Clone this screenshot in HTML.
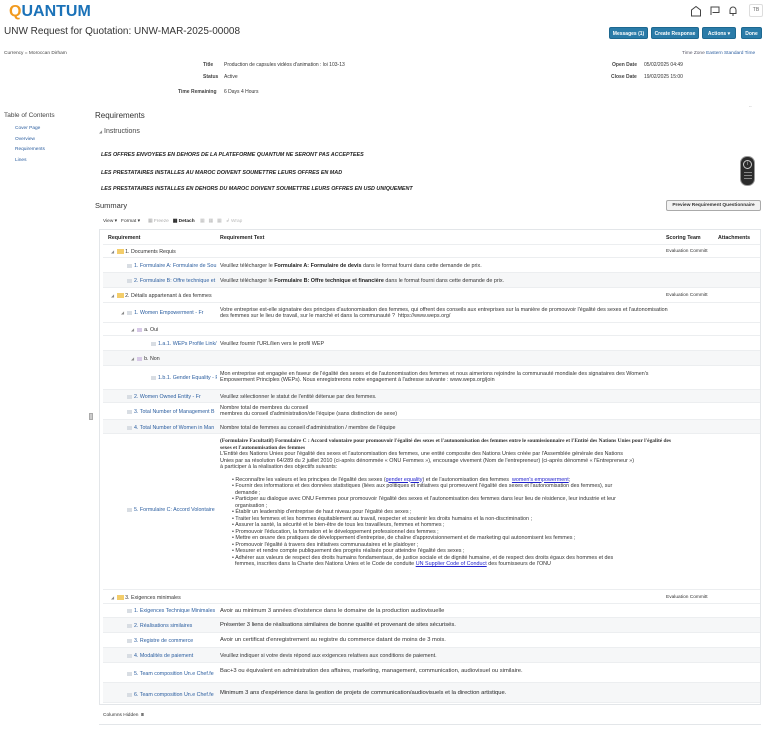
<!DOCTYPE html>
<html><head><meta charset="utf-8"><style>
*{margin:0;padding:0;box-sizing:border-box}
body{width:768px;height:729px;background:#fff;font-family:"Liberation Sans",Arial,sans-serif;color:#333;position:relative;overflow:hidden;font-size:5px}
.a{position:absolute;white-space:nowrap}
.lnk{color:#2a5d9f}
.btn{position:absolute;top:27px;height:12px;background:#2a7ba8;color:#fff;font-size:5px;font-weight:bold;border-radius:2px;line-height:12px;text-align:center;border:1px solid #1d6890}
.row{position:absolute;left:103px;width:657px;border-bottom:1px solid #eceef0;font-size:5.3px}
.sh{background:#f6f7f8}
.c1{position:absolute;overflow:hidden;white-space:nowrap;color:#2a5d9f}
.c2{position:absolute;left:117px;width:445px;line-height:6.3px;color:#333;white-space:nowrap;font-size:5.4px}
.ic{display:inline-block;width:5px;height:4px;background:#d8dde3;margin-right:2px;vertical-align:-1px}
.fd{display:inline-block;width:7px;height:5px;background:#f3cd6b;margin-right:1px;vertical-align:-1px}
.tri{color:#888;margin-right:3px;font-size:4px}
b{color:#222}
</style></head><body>
<div class="a" style="left:9px;top:3px;font-size:16px;font-weight:bold;color:#1b72b8;letter-spacing:0"><span style="color:#f29a1e">Q</span>UANTUM</div>
<div class="a" style="left:4px;top:26px;font-size:10px;color:#333">UNW Request for Quotation: UNW-MAR-2025-00008</div>
<svg class="a" style="left:690px;top:5px" width="12" height="12" viewBox="0 0 12 12"><path d="M1.5 11V5L6 1.5 10.5 5V11Z" fill="none" stroke="#444" stroke-width="1"/></svg>
<svg class="a" style="left:709px;top:5px" width="12" height="12" viewBox="0 0 12 12"><path d="M2 10V2H10V7.5H3.5" fill="none" stroke="#444" stroke-width="1"/></svg>
<svg class="a" style="left:727px;top:5px" width="12" height="12" viewBox="0 0 12 12"><path d="M3 8.5V5A3 3 0 0 1 9 5V8.5H2.5 9.5M5 10H7" fill="none" stroke="#444" stroke-width="1"/></svg>
<div class="a" style="left:749px;top:4px;width:14px;height:13px;border:1px solid #ddd;border-radius:2px;font-size:5px;color:#666;text-align:center;line-height:11px">TB</div>
<div class="btn" style="left:609px;width:39px">Messages (1)</div>
<div class="btn" style="left:651px;width:48px">Create Response</div>
<div class="btn" style="left:702px;width:34px">Actions &#9662;</div>
<div class="btn" style="left:741px;width:21px">Done</div>
<div class="a" style="left:4px;top:51px;font-size:4.8px;color:#444">Currency = Moroccan Dirham</div>
<div class="a" style="left:682px;top:51px;font-size:4.8px;color:#556">Time Zone <span style="color:#2a5d9f">Eastern Standard Time</span></div>
<div class="a" style="left:203px;top:62px;font-size:5px;font-weight:bold;color:#444">Title</div>
<div class="a" style="left:224px;top:62px;font-size:5px">Production de capsules vidéos d'animation : loi 103-13</div>
<div class="a" style="left:203px;top:74px;font-size:5px;font-weight:bold;color:#444">Status</div>
<div class="a" style="left:224px;top:74px;font-size:5px">Active</div>
<div class="a" style="left:178px;top:89px;font-size:5px;font-weight:bold;color:#444">Time Remaining</div>
<div class="a" style="left:224px;top:89px;font-size:5px">6 Days 4 Hours</div>
<div class="a" style="left:612px;top:62px;font-size:5px;font-weight:bold;color:#444">Open Date</div>
<div class="a" style="left:644px;top:62px;font-size:5px">05/02/2025 04:49</div>
<div class="a" style="left:611px;top:74px;font-size:5px;font-weight:bold;color:#444">Close Date</div>
<div class="a" style="left:644px;top:74px;font-size:5px">19/02/2025 15:00</div>
<div class="a" style="left:749px;top:103px;font-size:4px;color:#888">--</div>
<div class="a" style="left:4px;top:112px;font-size:6.5px;color:#444">Table of Contents</div>
<div class="a lnk" style="left:15px;top:126px;font-size:4.8px">Cover Page</div>
<div class="a lnk" style="left:15px;top:137px;font-size:4.8px">Overview</div>
<div class="a lnk" style="left:15px;top:147px;font-size:4.8px">Requirements</div>
<div class="a lnk" style="left:15px;top:158px;font-size:4.8px">Lines</div>
<div class="a" style="left:95px;top:111px;font-size:8px;color:#333">Requirements</div>
<div class="a" style="left:99px;top:128px;font-size:7px;color:#444"><span style="font-size:4px;color:#888">&#9698;</span> Instructions</div>
<div class="a" style="left:101px;top:152px;font-size:5.4px;font-weight:bold;font-style:italic;color:#222">LES OFFRES ENVOYEES EN DEHORS DE LA PLATEFORME QUANTUM NE SERONT PAS ACCEPTEES</div>
<div class="a" style="left:101px;top:170px;font-size:5.4px;font-weight:bold;font-style:italic;color:#222">LES PRESTATAIRES INSTALLES AU MAROC DOIVENT SOUMETTRE LEURS OFFRES EN MAD</div>
<div class="a" style="left:101px;top:186px;font-size:5.4px;font-weight:bold;font-style:italic;color:#222">LES PRESTATAIRES INSTALLES EN DEHORS DU MAROC DOIVENT SOUMETTRE LEURS OFFRES EN USD UNIQUEMENT</div>
<div class="a" style="left:740px;top:156px;width:15px;height:30px;background:#2b2b2b;border-radius:7px;border:1px solid #999"><div style="margin:3px auto 0;width:9px;height:9px;border:1px solid #ccc;border-radius:50%;color:#ccc;font-size:5px;text-align:center;line-height:7px">i</div><div style="margin:3px auto 0;width:8px;height:8px;background:repeating-linear-gradient(#888 0 1px,transparent 1px 3px)"></div></div>
<div class="a" style="left:95px;top:201px;font-size:7.5px;color:#333">Summary</div>
<div class="a" style="left:666px;top:200px;width:95px;height:11px;border:1px solid #aaa;border-radius:2px;background:#f2f2f2;font-size:4.8px;font-weight:bold;text-align:center;line-height:9px;color:#333">Preview Requirement Questionnaire</div>
<div class="a" style="left:103px;top:219px;font-size:4.8px;color:#333">View &#9662; &nbsp; Format &#9662; &nbsp;&nbsp;&nbsp;&nbsp; <span style="color:#aaa">&#9638; Freeze</span> &nbsp; <b>&#9638; Detach</b> &nbsp;&nbsp; <span style="color:#bbb">&#9638; &nbsp; &#9638; &nbsp; &#9638; &nbsp; &#8626; Wrap</span></div>
<div class="a" style="left:99px;top:229px;width:662px;height:476px;border:1px solid #e3e6e9"></div>
<div class="a" style="left:89px;top:413px;width:4px;height:7px;background:#ccc;border:1px solid #aaa"></div>
<div class="row" style="top:230px;height:15px;font-weight:bold;color:#222"><div class="a" style="left:5px;top:5px">Requirement</div><div class="a" style="left:117px;top:5px">Requirement Text</div><div class="a" style="left:563px;top:5px">Scoring Team</div><div class="a" style="left:615px;top:5px">Attachments</div></div>
<div class="row" style="top:245px;height:13px"><div class="c1" style="left:8px;top:4px;color:#333"><span class="tri">&#9698;</span><span class="fd"></span>1. Documents Requis</div><div class="a" style="left:563px;top:4px;font-size:4.8px">Evaluation Committ</div></div>
<div class="row" style="top:258px;height:15px"><div class="c1" style="left:24px;top:5px;width:90px"><span class="ic"></span>1. Formulaire A: Formulaire de Sou</div><div class="c2" style="top:5px">Veuillez télécharger le <b>Formulaire A: Formulaire de devis</b> dans le format fourni dans cette demande de prix.</div></div>
<div class="row sh" style="top:273px;height:15px"><div class="c1" style="left:24px;top:5px;width:90px"><span class="ic"></span>2. Formulaire B: Offre technique et</div><div class="c2" style="top:5px">Veuillez télécharger le <b>Formulaire B: Offre technique et financière</b> dans le format fourni dans cette demande de prix.</div></div>
<div class="row" style="top:288px;height:15px"><div class="c1" style="left:8px;top:5px;color:#333"><span class="tri">&#9698;</span><span class="fd"></span>2. Détails appartenant à des femmes</div><div class="a" style="left:563px;top:5px;font-size:4.8px">Evaluation Committ</div></div>
<div class="row" style="top:303px;height:20px"><div class="c1" style="left:18px;top:7px;width:96px"><span class="tri">&#9698;</span><span class="ic"></span>1. Women Empowerment - Fr</div><div class="c2" style="top:4px">Votre entreprise est-elle signataire des principes d'autonomisation des femmes, qui offrent des conseils aux entreprises sur la manière de promouvoir l'égalité des sexes et l'autonomisation<br>des femmes sur le lieu de travail, sur le marché et dans la communauté ? &nbsp;https://www.weps.org/</div></div>
<div class="row" style="top:323px;height:13px"><div class="c1" style="left:28px;top:4px;color:#333"><span class="tri">&#9698;</span><span class="ic" style="background:#d7c9e6"></span>a. Oui</div></div>
<div class="row" style="top:336px;height:15px"><div class="c1" style="left:48px;top:5px;width:66px"><span class="ic"></span>1.a.1. WEPs Profile Link/</div><div class="c2" style="top:5px">Veuillez fournir l'URL/lien vers le profil WEP</div></div>
<div class="row sh" style="top:351px;height:15px"><div class="c1" style="left:28px;top:5px;color:#333"><span class="tri">&#9698;</span><span class="ic" style="background:#d7c9e6"></span>b. Non</div></div>
<div class="row" style="top:366px;height:24px"><div class="c1" style="left:48px;top:9px;width:66px"><span class="ic"></span>1.b.1. Gender Equality - F</div><div class="c2" style="top:5px">Mon entreprise est engagée en faveur de l'égalité des sexes et de l'autonomisation des femmes et nous aimerions rejoindre la communauté mondiale des signataires des Women's<br>Empowerment Principles (WEPs). Nous enregistrerons notre engagement à l'adresse suivante : www.weps.org/join</div></div>
<div class="row sh" style="top:390px;height:13px"><div class="c1" style="left:24px;top:4px;width:90px"><span class="ic"></span>2. Women Owned Entity - Fr</div><div class="c2" style="top:4px">Veuillez sélectionner le statut de l'entité détenue par des femmes.</div></div>
<div class="row" style="top:403px;height:17px"><div class="c1" style="left:24px;top:6px;width:90px"><span class="ic"></span>3. Total Number of Management B</div><div class="c2" style="top:3px;line-height:5.8px">Nombre total de membres du conseil<br>membres du conseil d'administration/de l'équipe (sans distinction de sexe)</div></div>
<div class="row sh" style="top:420px;height:14px"><div class="c1" style="left:24px;top:5px;width:90px"><span class="ic"></span>4. Total Number of Women in Man</div><div class="c2" style="top:5px">Nombre total de femmes au conseil d'administration / membre de l'équipe</div></div>
<div class="row" style="top:434px;height:156px"><div class="c1" style="left:24px;top:73px;width:90px"><span class="ic"></span>5. Formulaire C: Accord Volontaire</div>
<div class="c2" style="top:4px;line-height:6.5px"><span style="font-family:'Liberation Serif',serif;font-weight:bold;line-height:5.5px">(Formulaire Facultatif) Formulaire C : Accord volontaire pour promouvoir l'égalité des sexes et l'autonomisation des femmes entre le soumissionnaire et l'Entité des Nations Unies pour l'égalité des<br>sexes et l'autonomisation des femmes</span><br>L'Entité des Nations Unies pour l'égalité des sexes et l'autonomisation des femmes, une entité composite des Nations Unies créée par l'Assemblée générale des Nations<br>Unies par sa résolution 64/289 du 2 juillet 2010 (ci-après dénommée « ONU Femmes »), encourage vivement (Nom de l'entrepreneur) (ci-après dénommé « l'Entrepreneur »)<br>à participer à la réalisation des objectifs suivants:
<div style="padding-left:12px;margin-top:6px">• Reconnaître les valeurs et les principes de l'égalité des sexes (<u style="color:#22c">gender equality</u>) et de l'autonomisation des femmes &nbsp;<u style="color:#22c">women's empowerment</u>;<br>• Fournir des informations et des données statistiques (liées aux politiques et initiatives qui promeuvent l'égalité des sexes et l'autonomisation des femmes), sur<br>&nbsp;&nbsp;demande ;<br>• Participer au dialogue avec ONU Femmes pour promouvoir l'égalité des sexes et l'autonomisation des femmes dans leur lieu de résidence, leur industrie et leur<br>&nbsp;&nbsp;organisation ;<br>• Établir un leadership d'entreprise de haut niveau pour l'égalité des sexes ;<br>• Traiter les femmes et les hommes équitablement au travail, respecter et soutenir les droits humains et la non-discrimination ;<br>• Assurer la santé, la sécurité et le bien-être de tous les travailleurs, femmes et hommes ;<br>• Promouvoir l'éducation, la formation et le développement professionnel des femmes ;<br>• Mettre en œuvre des pratiques de développement d'entreprise, de chaîne d'approvisionnement et de marketing qui autonomisent les femmes ;<br>• Promouvoir l'égalité à travers des initiatives communautaires et le plaidoyer ;<br>• Mesurer et rendre compte publiquement des progrès réalisés pour atteindre l'égalité des sexes ;<br>• Adhérer aux valeurs de respect des droits humains fondamentaux, de justice sociale et de dignité humaine, et de respect des droits égaux des hommes et des<br>&nbsp;&nbsp;femmes, inscrites dans la Charte des Nations Unies et le Code de conduite <u style="color:#22c">UN Supplier Code of Conduct</u> des fournisseurs de l'ONU</div></div></div>
<div class="row" style="top:590px;height:14px"><div class="c1" style="left:8px;top:5px;color:#333"><span class="tri">&#9698;</span><span class="fd"></span>3. Exigences minimales</div><div class="a" style="left:563px;top:5px;font-size:4.8px">Evaluation Committ</div></div>
<div class="row" style="top:604px;height:14px"><div class="c1" style="left:24px;top:4px;width:90px"><span class="ic"></span>1. Exigences Technique Minimales</div><div class="c2" style="top:4px;font-size:5.8px">Avoir au minimum 3 années d'existence dans le domaine de la production audiovisuelle</div></div>
<div class="row sh" style="top:618px;height:15px"><div class="c1" style="left:24px;top:5px;width:90px"><span class="ic"></span>2. Réalisations similaires</div><div class="c2" style="top:4px;font-size:5.8px;color:#222">Présenter 3 liens de réalisations similaires de bonne qualité et provenant de sites sécurisés.</div></div>
<div class="row" style="top:633px;height:15px"><div class="c1" style="left:24px;top:5px;width:90px"><span class="ic"></span>3. Registre de commerce</div><div class="c2" style="top:4px;font-size:5.8px">Avoir un certificat d'enregistrement au registre du commerce datant de moins de 3 mois.</div></div>
<div class="row sh" style="top:648px;height:15px"><div class="c1" style="left:24px;top:5px;width:90px"><span class="ic"></span>4. Modalités de paiement</div><div class="c2" style="top:5px">Veuillez indiquer si votre devis répond aux exigences relatives aux conditions de paiement.</div></div>
<div class="row" style="top:663px;height:20px"><div class="c1" style="left:24px;top:8px;width:90px"><span class="ic"></span>5. Team composition Un.e Chef.fe</div><div class="c2" style="top:5px;font-size:5.8px">Bac+3 ou équivalent en administration des affaires, marketing, management, communication, audiovisuel ou similaire.</div></div>
<div class="row sh" style="top:683px;height:20px"><div class="c1" style="left:24px;top:9px;width:90px"><span class="ic"></span>6. Team composition Un.e Chef.fe</div><div class="c2" style="top:7px;font-size:5.8px;color:#222">Minimum 3 ans d'expérience dans la gestion de projets de communication/audiovisuels et la direction artistique.</div></div>
<div class="a" style="left:103px;top:713px;font-size:4.8px;color:#333">Columns Hidden &nbsp;<b>8</b></div>
<div class="a" style="left:99px;top:724px;width:662px;border-top:1px solid #e3e6e9"></div>
</body></html>
